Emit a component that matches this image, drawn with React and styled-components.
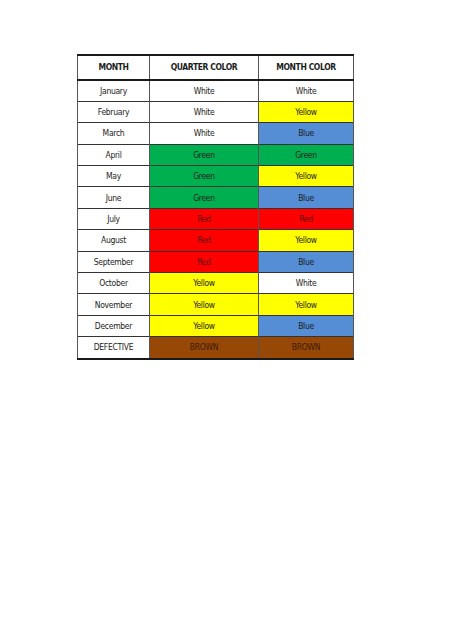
import React from "react";
import styled, { createGlobalStyle } from "styled-components";

const GlobalStyle = createGlobalStyle`
  html, body {
    margin: 0;
    padding: 0;
    background: #ffffff;
  }
`;

const Page = styled.div`
  width: 474px;
  height: 632px;
  padding: 54px 0 0 77px;
  box-sizing: border-box;
  background: #ffffff;
`;

const Table = styled.table`
  border-collapse: collapse;
  table-layout: fixed;
  width: 276px;
  font-family: "Liberation Sans Narrow", "DejaVu Sans Condensed", "Liberation Sans", sans-serif;
  font-stretch: condensed;
  font-size: 8.5px;
  color: #1c1c1c;
  border-bottom: 2px solid #1a1a1a;
`;

const HeadCell = styled.th`
  height: 22.5px;
  padding: 0;
  font-weight: 600;
  text-align: center;
  border-top: 2px solid #1a1a1a;
  border-bottom: 2px solid #1a1a1a;
  border-left: 1px solid #555555;
  border-right: 1px solid #555555;
  letter-spacing: -0.4px;
`;

const bg = {
  White: "#ffffff",
  Yellow: "#ffff00",
  Blue: "#558ed5",
  Green: "#00b050",
  Red: "#ff0000",
  BROWN: "#984806",
};

const Cell = styled.td`
  height: 20.4px;
  padding: 0;
  text-align: center;
  background: ${(p) => bg[p.$color] || "#ffffff"};
  color: ${(p) => (p.$color === "BROWN" ? "#3a1a00" : p.$color === "Red" ? "#5a0000" : "#1c1c1c")};
  border-top: 1px solid #333333;
  border-left: 1px solid #555555;
  border-right: 1px solid #555555;
  letter-spacing: -0.3px;
`;

const rows = [
  ["January", "White", "White"],
  ["February", "White", "Yellow"],
  ["March", "White", "Blue"],
  ["April", "Green", "Green"],
  ["May", "Green", "Yellow"],
  ["June", "Green", "Blue"],
  ["July", "Red", "Red"],
  ["August", "Red", "Yellow"],
  ["September", "Red", "Blue"],
  ["October", "Yellow", "White"],
  ["November", "Yellow", "Yellow"],
  ["December", "Yellow", "Blue"],
  ["DEFECTIVE", "BROWN", "BROWN"],
];

const App = () => {
  return (
    <Page>
      <GlobalStyle />
      <Table>
        <colgroup>
          <col style={{ width: "72px" }} />
          <col style={{ width: "109px" }} />
          <col style={{ width: "95px" }} />
        </colgroup>
        <thead>
          <tr>
            <HeadCell>MONTH</HeadCell>
            <HeadCell>QUARTER COLOR</HeadCell>
            <HeadCell>MONTH COLOR</HeadCell>
          </tr>
        </thead>
        <tbody>
          {rows.map(([month, quarter, monthColor]) => (
            <tr key={month}>
              <Cell>{month}</Cell>
              <Cell $color={quarter}>{quarter}</Cell>
              <Cell $color={monthColor}>{monthColor}</Cell>
            </tr>
          ))}
        </tbody>
      </Table>
    </Page>
  );
};

export default App;
